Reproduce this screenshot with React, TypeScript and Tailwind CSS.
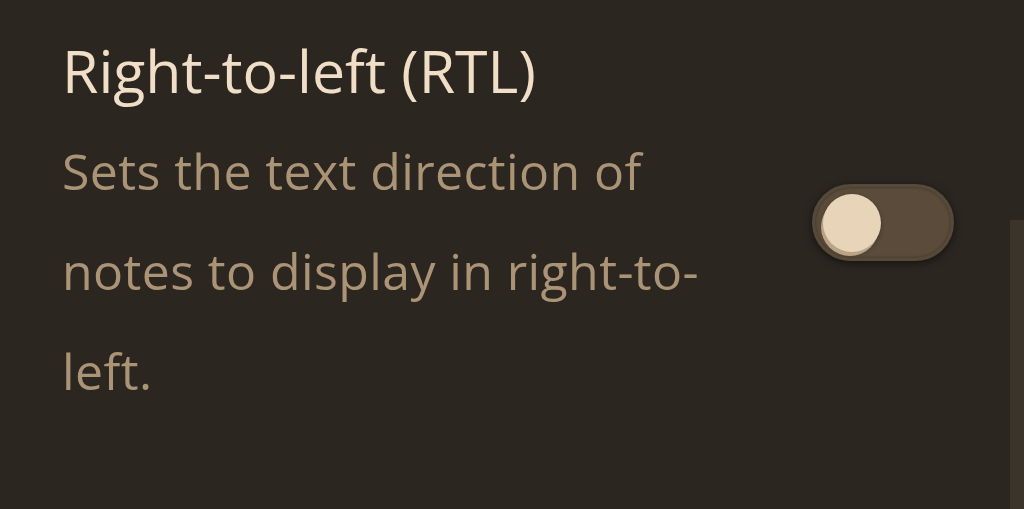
export default function App() {
  return (
    <div className="relative h-[509px] w-[1024px] overflow-hidden bg-[#2b2620] font-['Open_Sans',sans-serif]">
      <div className="flex items-center pl-[62px] pt-[30px]">
        <div className="w-[720px]">
          <h1 className="text-[59px] leading-[80px] text-[#f0dfc6]">Right-to-left (RTL)</h1>
          <p className="mt-[11px] text-[50px] leading-[100px] tracking-[0.4px] text-[#ab9476]">
            Sets the text direction of notes to display in right-to-left.
          </p>
        </div>
        <div className="mb-[6px] ml-[30px] flex h-[77px] w-[142px] items-center rounded-full border-[3px] border-[#55493a] bg-[#5a4b3a] px-[8px] shadow-[0_2px_8px_rgba(0,0,0,0.55),inset_0_0_3px_rgba(0,0,0,0.35)]">
          <div className="h-[58px] w-[58px] rounded-full bg-[#e8d4b8] shadow-[-2px_4px_0_#b9a487,0_2px_4px_rgba(0,0,0,0.3)]" />
        </div>
      </div>
      <div className="absolute right-0 top-[220px] h-[289px] w-[14px] bg-[#3b342b]" />
    </div>
  );
}
